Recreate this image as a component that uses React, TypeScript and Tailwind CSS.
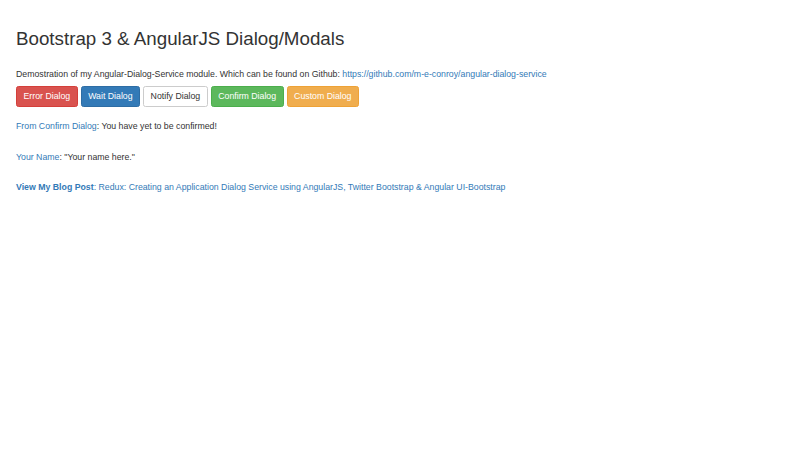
import React from 'react';

const buttons = [
  { label: 'Error Dialog', cls: 'bg-[#d9534f] border-[#d43f3a] text-white' },
  { label: 'Wait Dialog', cls: 'bg-[#337ab7] border-[#2e6da4] text-white' },
  { label: 'Notify Dialog', cls: 'bg-white border-[#cccccc] text-[#333333]' },
  { label: 'Confirm Dialog', cls: 'bg-[#5cb85c] border-[#4cae4c] text-white' },
  { label: 'Custom Dialog', cls: 'bg-[#f0ad4e] border-[#eea236] text-white' },
];

export default function App() {
  return (
    <div className="min-h-[450px] bg-white px-[16px] pt-[29px] text-[8.75px] leading-[1.42857] text-[#333333] font-['Liberation_Sans',Arial,sans-serif]">
      <h1 className="text-[18.75px] leading-[1.1] font-normal mb-[18px]">Bootstrap 3 &amp; AngularJS Dialog/Modals</h1>
      <p className="mb-[6px]">
        Demostration of my Angular-Dialog-Service module. Which can be found on Github:{' '}
        <a href="#" className="text-[#337ab7]">https://github.com/m-e-conroy/angular-dialog-service</a>
      </p>
      <div className="flex gap-[3px]">
        {buttons.map((b) => (
          <button
            key={b.label}
            className={`h-[21px] px-[6.5px] border rounded-[2.5px] text-[8.75px] leading-[1.42857] ${b.cls}`}
          >
            {b.label}
          </button>
        ))}
      </div>
      <p className="mt-[13px]">
        <a href="#" className="text-[#337ab7]">From Confirm Dialog</a>: You have yet to be confirmed!
      </p>
      <p className="mt-[18px]">
        <a href="#" className="text-[#337ab7]">Your Name</a>: "Your name here."
      </p>
      <p className="mt-[18px]">
        <a href="#" className="text-[#337ab7]">
          <strong>View My Blog Post</strong>: Redux: Creating an Application Dialog Service using AngularJS, Twitter Bootstrap &amp; Angular UI-Bootstrap
        </a>
      </p>
    </div>
  );
}
